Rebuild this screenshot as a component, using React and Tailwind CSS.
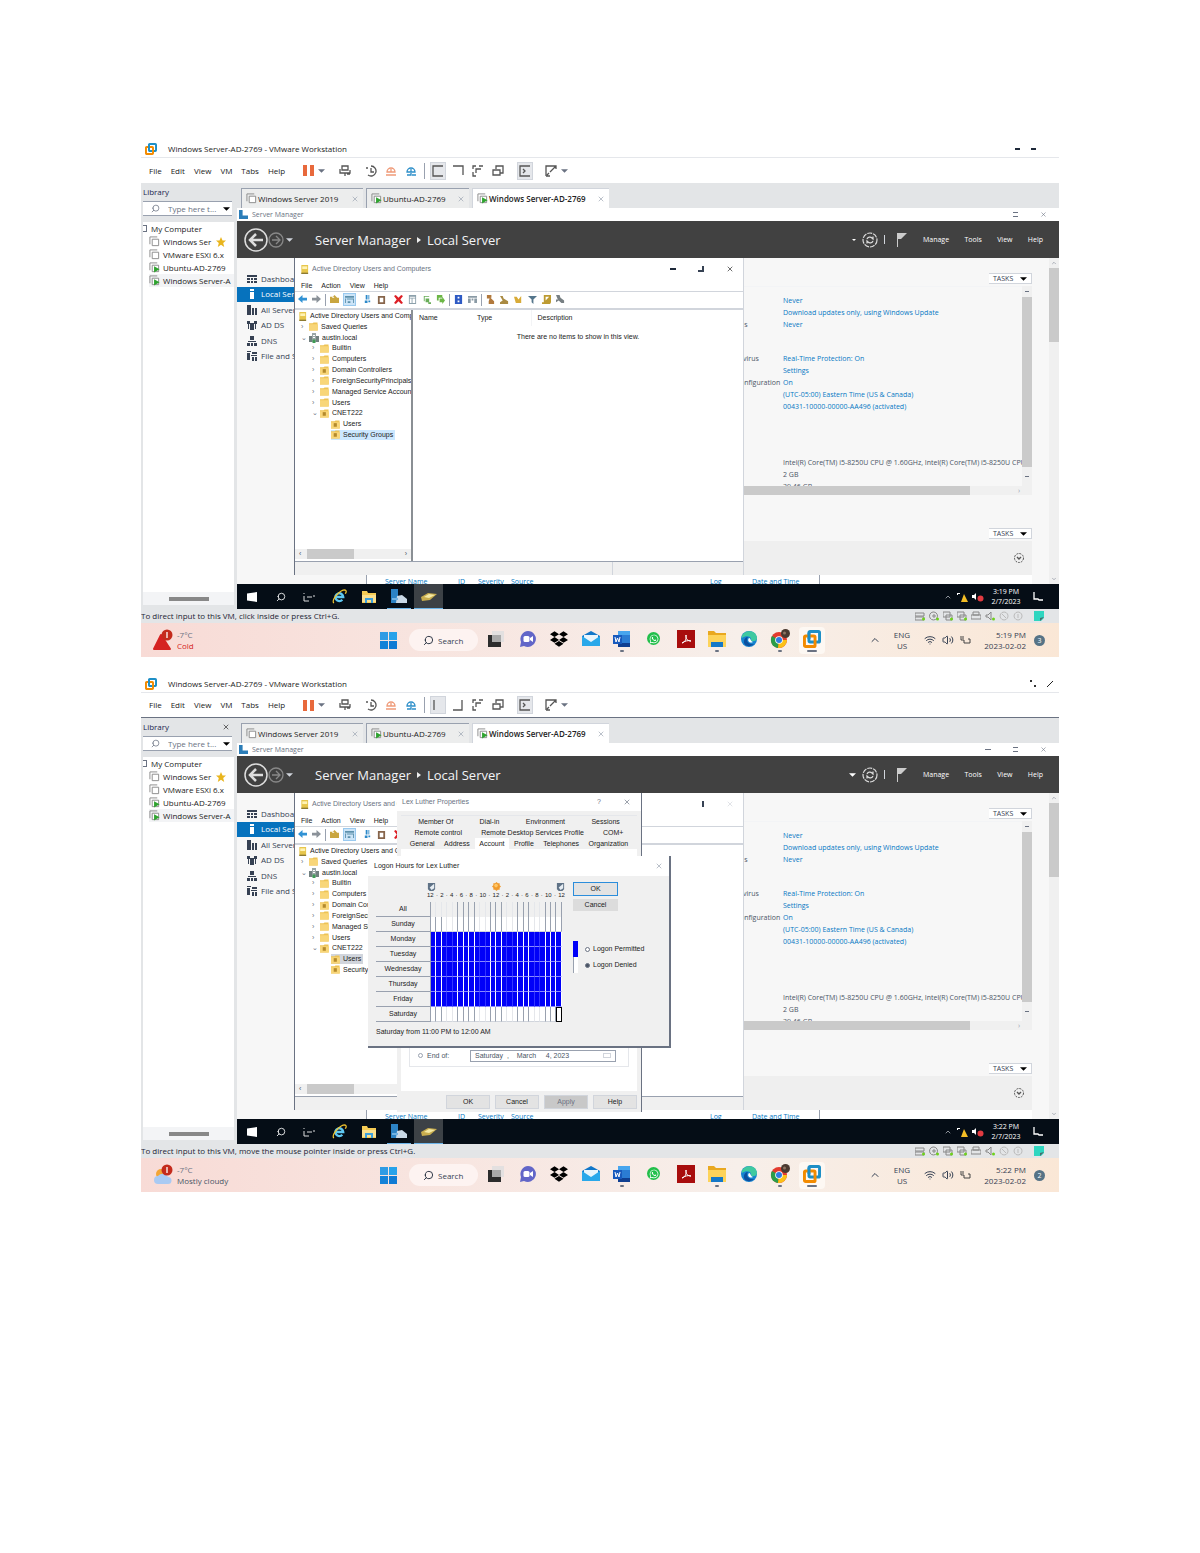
import clsx from 'clsx';
import { FaDropbox, FaWhatsapp } from 'react-icons/fa';
import { ChevronUp, Search, Volume2, Wifi, X } from 'lucide-react';

const sessions = [
  {
    id: 'a',
    hint: 'To direct input to this VM, click inside or press Ctrl+G.',
    serverTime: '3:19 PM',
    hostTime: '5:19 PM',
    weather: 'Cold',
    selected: 'Security Groups',
    badge: '3',
    dialogs: false,
  },
  {
    id: 'b',
    hint: 'To direct input to this VM, move the mouse pointer inside or press Ctrl+G.',
    serverTime: '3:22 PM',
    hostTime: '5:22 PM',
    weather: 'Mostly cloudy',
    selected: 'Users',
    badge: '2',
    dialogs: true,
  },
];

/* ---------- icons ---------- */

function VmwareLogo({ className }) {
  return (
    <svg viewBox="0 0 16 16" className={className} fill="none" strokeWidth="2.6">
      <rect x="5.3" y="1.3" width="9.4" height="9.4" rx="1" stroke="#1e8fc6" />
      <rect x="1.3" y="5.3" width="9.4" height="9.4" rx="1" stroke="#f38b00" />
      <path d="M5.3 8V2.5" stroke="#1e8fc6" />
    </svg>
  );
}

function VmIcon({ running }) {
  return (
    <svg viewBox="0 0 12 12" className="w-[11px] h-[11px] shrink-0" fill="none" stroke="#888">
      <path d="M1 9V1h8" />
      <path d="M3.5 3.5h7v7h-7z" fill="#fff" />
      {running && <path d="M5.5 4.5v7L11.5 8z" fill="#2fa32f" stroke="none" />}
    </svg>
  );
}

function Folder({ marked }) {
  return (
    <svg viewBox="0 0 10 10" className="w-[9px] h-[9px] shrink-0">
      <path d="M0 1.5h4l1-1h4.500v9H0z" fill="#edc355" />
      <path d="M0 2.500h10V9.500H0z" fill="#f8d679" />
      {marked && <path d="M3 3.500h3.500v4H3z" fill="#b48a2c" />}
    </svg>
  );
}

function Book() {
  return (
    <svg viewBox="0 0 10 10" className="w-[9px] h-[9px] shrink-0">
      <path d="M1.500 0H9v10H1.500z" fill="#e7c64c" />
      <path d="M2.500 1.500h5.500v3H2.500z" fill="#fff3b5" />
      <path d="M1.500 8.500H9V10H1.500z" fill="#8c7a33" />
    </svg>
  );
}

function Domain() {
  return (
    <svg viewBox="0 0 10 10" className="w-[10px] h-[10px] shrink-0">
      <path d="M3 0h4v9H3z" fill="#9aa6a6" />
      <path d="M0 3h3v6H0zM7 3h3v6H7z" fill="#728080" />
      <path d="M4 2h2v1H4zM4 4h2v1H4z" fill="#fff" />
      <path d="M3.500 6.500h3V10h-3z" fill="#3f9b55" />
    </svg>
  );
}

function Moon() {
  return (
    <svg viewBox="0 0 10 10" className="w-[9px] h-[9px]">
      <path d="M1 1h8v7l-2 2H3L1 8z" fill="#5f7286" />
      <path d="M3 6l5-4v5L5 9z" fill="#e6edf3" />
    </svg>
  );
}

function Sun() {
  return (
    <svg viewBox="0 0 10 10" className="w-[9px] h-[9px]">
      <path d="M5 0l1.500 1.500h2v2L10 5 8.500 6.500v2h-2L5 10 3.500 8.500h-2v-2L0 5l1.500-1.500v-2h2z" fill="#f09a2c" />
      <circle cx="4.500" cy="4" r="2" fill="#ffc765" />
    </svg>
  );
}

function Caret({ className, small }) {
  return (
    <svg viewBox="0 0 8 4" className={clsx('shrink-0', small ? 'w-[4px] h-[2px]' : 'w-[7px] h-[4px]', className)} fill="currentColor">
      <path d="M0 0h8L4 4z" />
    </svg>
  );
}

const navIcons = {
  Dashboard: 'M0 1h10v2H0zM0 4h3v2H0zM4 4h2v2H4zM7 4h3v2H7zM0 7h3v2H0zM4 7h2v2H4zM7 7h3v2H7z',
  'Local Server': 'M3 0h4v2H3zM3 3h4v7H3z',
  'All Servers': 'M0 0h4v10H0zM5 3h2v7H5zM8 3h2v7H8z',
  'AD DS': 'M0 1h3v3H0zM7 1h3v3H7zM1 4h1v5H1zM8 4h1v5H8zM3 3h4v7H3z',
  DNS: 'M3 0h4v4H3zM1 5h8v1H1zM0 7h3v3H0zM4 7h2v3H4zM7 7h3v3H7z',
  'File and Storage Services': 'M0 0h4v1H0zM0 2h3v7H0zM5 1h5v2H5zM4 4h6v1H4zM5 6h2v4H5zM8 6h2v4H8z',
};

/* ---------- VMware frame ---------- */

function TitleBar({ second }) {
  return (
    <header className="flex items-center h-[18px] pl-1 bg-white border-b border-gray-200">
      <VmwareLogo className="w-3 h-3" />
      <h1 className="ml-[11px] flex-1 text-[8px]">Windows Server-AD-2769 - VMware Workstation</h1>
      {second ? (
        <div className="flex items-center gap-[9px] mr-[5px]">
          <svg viewBox="0 0 8 8" className="w-2 h-2" fill="#333"><path d="M1 0h2v2H1zM5 5h2v2H5z" /></svg>
          <svg viewBox="0 0 8 8" className="w-2 h-2" stroke="#222"><path d="M1 7l6-6" /></svg>
        </div>
      ) : (
        <div className="flex items-center gap-[11px] mr-[23px]">
          <span className="w-[5px] h-[2px] bg-gray-800" />
          <span className="w-[5px] h-[2px] bg-gray-800" />
        </div>
      )}
    </header>
  );
}

function Tool({ d, color = '#555', active, label }) {
  return (
    <button
      aria-label={label}
      className={clsx('flex items-center justify-center w-4 h-[18px] shrink-0', active && 'bg-gray-200 border border-gray-300')}
    >
      <svg viewBox="0 0 12 12" className="w-3 h-3 shrink-0" fill="none" stroke={color} strokeWidth="1.300">
        <path d={d} />
      </svg>
    </button>
  );
}

function MenuBar({ second }) {
  return (
    <div className={clsx('flex items-center pl-2 bg-white text-[8px]', second ? 'h-6' : 'h-[25px]')}>
      <div className="flex w-[154px]">
        {['File', 'Edit', 'View', 'VM', 'Tabs', 'Help'].map((m) => (
          <button key={m} className="pr-[9px] last:pr-0">{m}</button>
        ))}
      </div>
      <button aria-label="Suspend" className="flex gap-[3px]">
        <span className="w-[4px] h-[11px] bg-[#e8693c]" />
        <span className="w-[4px] h-[11px] bg-[#e8693c]" />
      </button>
      <Caret className="ml-1 text-gray-500" />
      <div className="flex ml-3">
        <Tool label="Send Ctrl+Alt+Del" d="M3 1h6v4H3zM1 4v4h10V5M6 8v3M8 9h3" />
      </div>
      <div className="flex gap-[4px] ml-[10px]">
        <Tool label="Take snapshot" d="M1 3h2M6 1a5 5 0 1 1-3 9M6 3v4h3" />
        <Tool label="Revert snapshot" color="#ef9a78" d="M2 7a4 4 0 0 1 8 0zM6 4v3M1 10h10" />
        <Tool label="Manage snapshots" color="#2d8fc9" d="M2 7a4 4 0 0 1 8 0zM6 4v3M2 10h4v-2M7 10h4" />
      </div>
      <span className="mx-[5px] w-px h-4 bg-gray-400" />
      <div className="flex gap-1">
        <Tool label="Show library" active d={second ? 'M2 1v10' : 'M11 1H1v10h10'} />
        <Tool label="Show thumbnail bar" d={second ? 'M10 1v10H1' : 'M1 1h10v9'} />
        <Tool label="Full screen" d="M1 4V1h3M7 1h4M1 7v4h3M4 8V4h5" />
        <Tool label="Unity" d="M4 4V1h7v7H8M1 5h7v5H1z" />
      </div>
      <div className="flex gap-[10px] ml-[11px]">
        <Tool label="Console" active d="M11 1H1v10h10M4 4l2 2-2 2" />
        <Tool label="Stretch guest" d="M8 1H1v10M1 11h4M5 7l6-6M8 1h3v3M4 8l-2 2" />
      </div>
      <Caret className="ml-[2px] text-gray-500" />
    </div>
  );
}

function Library({ second }) {
  const vms = [
    { name: 'Windows Ser', star: true },
    { name: 'VMware ESXi 6.x' },
    { name: 'Ubuntu-AD-2769', running: true },
    { name: 'Windows Server-A', running: true, active: true },
  ];
  return (
    <aside className="flex flex-col w-24 shrink-0 pl-[2px] pr-[3px] text-[8px] overflow-hidden">
      <div className="flex items-center h-[18px] pr-1">
        <span className="flex-1 text-[#1b2550]">Library</span>
        {second && <X className="w-2 h-2" />}
      </div>
      <label className="flex items-center h-[15px] mr-[2px] bg-white border-y border-gray-400 text-gray-500">
        <Search className="ml-2 w-[9px] h-[9px] -scale-x-100" />
        <input aria-label="Search library" placeholder="Type here t..." className="flex-1 min-w-0 ml-2 outline-none placeholder:text-gray-500" />
        <Caret className="mr-[2px] text-black" />
      </label>
      <ul className="flex-1 mt-[6px] bg-white whitespace-nowrap">
        <li className="flex items-center h-[13px] gap-1">
          <span className="w-1 h-[7px] border border-l-0 border-gray-500" />
          My Computer
        </li>
        {vms.map((vm) => (
          <li key={vm.name} className={clsx('flex items-center h-[13px] ml-[6px] gap-[3px] overflow-hidden', vm.active && 'bg-gray-100')}>
            <VmIcon running={vm.running} />
            {vm.name}
            {vm.star && (
              <svg viewBox="0 0 10 10" className="ml-[2px] w-[10px] h-[10px] shrink-0"><path d="M5 0l1.500 3.500H10L7.200 6l1 4L5 7.700 1.800 10l1-4L0 3.500h3.500z" fill="#e9b51d" /></svg>
            )}
          </li>
        ))}
      </ul>
      <div className="flex justify-center items-center h-[13px] mb-1 bg-gray-100">
        <span className="w-10 h-[4px] bg-[#888]" />
      </div>
    </aside>
  );
}

function VmTabs() {
  const tabs = [
    { name: 'Windows Server 2019', width: 'w-[122px]' },
    { name: 'Ubuntu-AD-2769', width: 'w-[103px]', running: true },
    { name: 'Windows Server-AD-2769', width: 'w-[137px]', running: true, active: true },
  ];
  return (
    <div className="flex items-end h-[25px] pl-1 gap-[3px] text-[8px]">
      {tabs.map((tab) => (
        <div
          key={tab.name}
          className={clsx('flex items-center h-5 px-1 border-t border-l whitespace-nowrap', tab.width, tab.active ? 'bg-white border-gray-300 font-semibold' : 'bg-[#eceded] border-gray-400')}
        >
          <VmIcon running={tab.running} />
          <button className="flex-1 ml-px text-left">{tab.name}</button>
          <X className="w-2 h-2 text-gray-400" />
        </div>
      ))}
    </div>
  );
}

/* ---------- Server Manager ---------- */

function ServerManagerHeader({ second }) {
  return (
    <>
      <div className="flex items-center h-[13px] pl-[2px] pr-3 bg-white text-[7px] text-gray-500">
        <svg viewBox="0 0 10 10" className="w-[9px] h-[9px]"><path d="M0 0h4v6h6v4H0z" fill="#2b7db8" /></svg>
        <span className="ml-1 flex-1">Server Manager</span>
        <span className={clsx('w-[6px] h-px bg-gray-500 mr-[22px]', !second && 'hidden')} />
        <span className="w-[5px] h-[5px] border-y border-gray-500 mr-[22px]" />
        <X className="w-[7px] h-[7px]" />
      </div>
      <div className="flex items-center h-[37px] pl-[7px] pr-4 bg-[#414141] text-white">
        <svg viewBox="0 0 24 24" className="w-6 h-6" fill="none" stroke="#ddd" strokeWidth="2">
          <circle cx="12" cy="12" r="11" strokeWidth="1.500" />
          <path d="M19 12H6M12 6l-6 6 6 6" strokeWidth="2.500" />
        </svg>
        <svg viewBox="0 0 16 16" className="w-4 h-4" fill="none" stroke="#888" strokeWidth="1.300">
          <circle cx="8" cy="8" r="7" />
          <path d="M4 8h8M8 4l4 4-4 4" />
        </svg>
        <Caret className="ml-[2px] text-gray-300" />
        <h2 className="flex items-center ml-[22px] flex-1 text-[13px] leading-4 text-gray-100 whitespace-nowrap">
          Server Manager
          <svg viewBox="0 0 4 6" className="mx-[6px] w-[4px] h-[6px]" fill="#eee"><path d="M0 0l4 3-4 3z" /></svg>
          Local Server
        </h2>
        <Caret small={!second} />
        <svg viewBox="0 0 16 16" className="ml-[6px] w-4 h-4" fill="none" stroke="#ddd" strokeWidth="1.200">
          <circle cx="8" cy="8" r="7" strokeDasharray="5 1" />
          <path d="M5 7a3 3 0 0 1 5-1l1 1V4.500M11 9a3 3 0 0 1-5 1L5 9v2.500" />
        </svg>
        <span className="ml-[6px] w-px h-[9px] bg-gray-300" />
        <svg viewBox="0 0 10 14" className="ml-3 w-[10px] h-[14px]"><path d="M0 0h10L4 6H1v8H0z" fill="#ccc" /></svg>
        <div className="flex justify-between w-[120px] ml-4 text-[7px]">
          {['Manage', 'Tools', 'View', 'Help'].map((m) => <button key={m}>{m}</button>)}
        </div>
      </div>
    </>
  );
}

function SideNav() {
  return (
    <nav className="w-[57px] shrink-0 pt-[13px] bg-[#f7f7f7] text-[8px] overflow-hidden">
      <div className="flex flex-col justify-between h-[93px]">
        {Object.entries(navIcons).map(([name, d]) => (
          <a
            key={name}
            href="#"
            className={clsx('flex items-center h-[15px] pl-[10px] gap-1 whitespace-nowrap', name === 'Local Server' ? 'bg-[#0672bd] text-white' : 'text-gray-700')}
          >
            <svg viewBox="0 0 10 10" className="w-[10px] h-[10px] shrink-0" fill="currentColor"><path d={d} /></svg>
            {name}
          </a>
        ))}
      </div>
    </nav>
  );
}

const properties = [
  [
    ['Last installed updates', 'Never'],
    ['Windows Update', 'Download updates only, using Windows Update'],
    ['Last checked for updates', 'Never'],
  ],
  [
    ['Windows Defender Antivirus', 'Real-Time Protection: On'],
    ['Feedback & Diagnostics', 'Settings'],
    ['IE Enhanced Security Configuration', 'On'],
    ['Time zone', '(UTC-05:00) Eastern Time (US & Canada)'],
    ['Product ID', '00431-10000-00000-AA496 (activated)'],
  ],
];

function TasksButton() {
  return (
    <button className="flex items-center justify-between w-[43px] h-[11px] px-1 bg-white border-y border-r border-gray-300 text-[7px] text-gray-700">
      TASKS
      <Caret className="text-black" />
    </button>
  );
}

function Properties() {
  return (
    <section className="flex flex-col flex-1 min-w-0 bg-[#f7f7f7] pr-[17px] text-[7px]">
      <div className="flex justify-end pt-[15px] pb-[2px]">
        <TasksButton />
      </div>
      <div className="flex h-[200px]">
        <div className="flex-1 min-w-0 pl-[372px] pt-[8px] border-t border-gray-100 overflow-hidden whitespace-nowrap">
          {properties.map((group, i) => (
            <dl key={i} className="mb-[22px]">
              {group.map(([label, value]) => (
                <div key={label} className="flex h-3 items-center">
                  <dt className="w-[117px] shrink-0 text-gray-600">{label}</dt>
                  <dd><a href="#" className="text-[#0678c4]">{value}</a></dd>
                </div>
              ))}
            </dl>
          ))}
          <div className="mt-[44px] pl-[117px] text-gray-600 leading-3">
            <p>Intel(R) Core(TM) i5-8250U CPU @ 1.60GHz, Intel(R) Core(TM) i5-8250U CPU @ 1.60GHz</p>
            <p>2 GB</p>
            <p>39.46 GB</p>
          </div>
        </div>
        <div className="flex flex-col w-[10px] bg-[#f0f0f0]">
          <span className="flex justify-center items-center h-[11px]"><span className="w-[4px] h-px bg-gray-500" /></span>
          <span className="h-[170px] bg-[#cacaca]" />
          <span className="flex justify-center items-center flex-1"><span className="w-[4px] h-px bg-gray-500" /></span>
        </div>
      </div>
      <div className="flex items-center h-[9px] bg-[#f0f0f0] text-gray-400">
        <span className="w-[676px] h-full bg-[#cacaca]" />
        <span className="flex-1 text-right pr-3">›</span>
      </div>
      <div className="flex justify-end pt-[33px] pb-[2px]">
        <TasksButton />
      </div>
      <div className="flex justify-end items-center h-[34px] pr-2 bg-[#efefef]">
        <svg viewBox="0 0 10 10" className="w-[10px] h-[10px]" fill="none" stroke="#555"><circle cx="5" cy="5" r="4.500" strokeDasharray="2 1" /><path d="M3 4l2 2 2-2" strokeWidth="1.400" /></svg>
      </div>
      <div className="flex flex-1 ml-[72px] pl-[18px] border-l border-gray-400 bg-white text-[#0678c4] leading-[14px] h-2 overflow-hidden whitespace-nowrap">
        <span className="w-[73px]">Server Name</span>
        <span className="w-[20px]">ID</span>
        <span className="w-[33px]">Severity</span>
        <span className="w-[199px]">Source</span>
        <span className="w-[42px]">Log</span>
        <span className="w-[68px] border-r border-gray-400">Date and Time</span>
      </div>
    </section>
  );
}

/* ---------- Active Directory Users and Computers ---------- */

const tree = [
  { name: 'Active Directory Users and Computers', pad: 'pl-[3px]', icon: 'book' },
  { name: 'Saved Queries', pad: 'pl-[6px]', mark: '›' },
  { name: 'austin.local', pad: 'pl-[6px]', mark: '⌄', icon: 'domain' },
  { name: 'Builtin', pad: 'pl-[17px]', mark: '›' },
  { name: 'Computers', pad: 'pl-[17px]', mark: '›' },
  { name: 'Domain Controllers', pad: 'pl-[17px]', mark: '›', marked: true },
  { name: 'ForeignSecurityPrincipals', pad: 'pl-[17px]', mark: '›' },
  { name: 'Managed Service Accounts', pad: 'pl-[17px]', mark: '›' },
  { name: 'Users', pad: 'pl-[17px]', mark: '›' },
  { name: 'CNET222', pad: 'pl-[17px]', mark: '⌄', marked: true },
  { name: 'Users', pad: 'pl-[36px]', marked: true, leaf: true },
  { name: 'Security Groups', pad: 'pl-[36px]', marked: true, leaf: true },
];

function DirectoryTree({ selected, second }) {
  return (
    <div className="flex flex-col w-[118px] shrink-0 bg-white border-r-2 border-[#8a8f94]">
      <ul className="flex flex-col justify-between h-[130px] pt-px overflow-hidden whitespace-nowrap">
        {tree.map((node, i) => (
          <li key={i} className={clsx('flex items-center h-[10px]', node.pad)}>
            {node.mark && <span className="w-2 shrink-0 text-gray-500">{node.mark}</span>}
            <span className={clsx('flex items-center gap-[3px] pr-[2px]', node.leaf && node.name === selected && (second ? 'bg-gray-300' : 'bg-[#cce8ff]'))}>
              {node.icon === 'book' && <Book />}
              {node.icon === 'domain' && <Domain />}
              {!node.icon && <Folder marked={node.marked} />}
              {node.name}
            </span>
          </li>
        ))}
      </ul>
      <div className="flex items-center mt-auto mb-[2px] h-[10px] px-1 bg-[#f0f0f0] text-gray-600">
        <span className="w-2">‹</span>
        <span className="w-[47px] h-full bg-[#cacaca]" />
        <span className="ml-auto">›</span>
      </div>
    </div>
  );
}

function AducToolbar() {
  const icons = [
    ['#3192d4', 'M5 0v3h5v3H5v3L0 4.500z'],
    ['#8b9299', 'M5 0v3H0v3h5v3l5-4.500z'],
    'line',
    ['#c9a640', 'M0 2h4l1 1h5v6H0zM5 0l3 3H2z'],
    ['#5d91ad', 'M0 1h10v2H0zM0 4h1v5H0zM2 4h8v1H2zM9 5h1v4H9zM3 7h3v2H3z', true],
    'space',
    ['#2c89c9', 'M3 0h2v5H3zM6 0h1v5H6zM2 6h3v3H2zM6 6h2v2H6z'],
    ['#87654b', 'M1 1h8v9H1zM3 3v5h4V3z'],
    'space',
    ['#dd1f26', 'M0 1l2-1 3 3 3-3 2 1-3 4 3 4-2 1-3-3-3 3-2-1 3-4z'],
    ['#8ca0ab', 'M1 0h8v10H1zM2 2v1h6V2zM2 4v5h2V4zM5 4v5h3V4z'],
    ['#68ad58', 'M2 1h6v1H3v5H2zM4 4h4v4H4zM7 8h3v2H7z'],
    ['#6bb645', 'M1 0h6v3H3v3H1zM4 4h3V2l3 4-3 4V8H4z'],
    'line',
    ['#2e5ac4', 'M1 0h8v10H1zM4 2v2h2V2zM4 6v2h2V6z'],
    ['#8a9aa5', 'M0 1h10v2H0zM0 4h3v5H0zM4 4h2v2H4zM7 4h3v5H7z'],
    'line',
    ['#b1793d', 'M1 0h5v3H5l4 4v3H3V7l1-3H1z'],
    ['#a98a42', 'M0 1h3l1 3 5 3v3H0V8l3-2z'],
    ['#d8ab38', 'M0 2h3l2 3 3-4v8H2z'],
    ['#54758b', 'M0 1h10L6 5v5L4 8V5z'],
    ['#bd9b32', 'M2 0h8v8l-1 2H0V8h2zM4 2v4l4-4z'],
    ['#777f83', 'M0 0h4l1 3 4 3v3H6L3 6 0 8V5h2z'],
  ];
  return (
    <div className="flex items-center h-[15px] pl-[2px] gap-[3px]">
      {icons.map((icon, i) =>
        Array.isArray(icon) ? (
          <button key={i} aria-label={`Tool ${i + 1}`} className={clsx('flex items-center justify-center h-[13px]', icon[2] ? 'w-[13px] bg-[#cce4f7] border border-[#99c9ef]' : 'w-[11px]')}>
            <svg viewBox="0 0 10 10" className="w-[9px] h-[9px]" fill={icon[0]} fillRule="evenodd"><path d={icon[1]} /></svg>
          </button>
        ) : (
          <span key={i} className={clsx('h-3', icon === 'line' && 'w-px bg-gray-400')} />
        ),
      )}
    </div>
  );
}

function AducWindow({ selected, second }) {
  return (
    <div className="absolute left-[57px] top-0 flex flex-col w-[450px] h-[317px] bg-white border-l border-r border-l-gray-500 border-r-gray-300 font-['Liberation_Sans',sans-serif] text-[7px]">
      <div className="flex items-center h-[22px] pl-[5px] pr-[9px]">
        <Book />
        <span className="ml-[3px] flex-1 text-gray-500">Active Directory Users and Computers</span>
        <span className={clsx('w-[6px] h-[2px] mr-[22px] bg-gray-800', second && 'invisible')} />
        <span className={clsx('w-[6px] h-[6px] mr-[22px] border-r-2 border-gray-700', !second && 'border-b-2')} />
        <X className={clsx('w-2 h-2', second && 'text-gray-300')} />
      </div>
      <div className="flex items-center h-[11px] pl-[6px] gap-[9px]">
        {['File', 'Action', 'View', 'Help'].map((m) => <button key={m}>{m}</button>)}
      </div>
      <div className="h-[19px] border-t border-gray-300 border-b-2 border-b-gray-300">
        <AducToolbar />
      </div>
      <div className="flex flex-1 min-h-0 border-b border-gray-400">
        <DirectoryTree selected={selected} second={second} />
        <div className="flex-1">
          {!second && (
            <table className="w-full text-left">
              <thead>
                <tr className="h-4">
                  <th className="w-[58px] pl-[6px] font-normal">Name</th>
                  <th className="w-[60px] pl-[6px] font-normal border-r border-gray-100">Type</th>
                  <th className="pl-[6px] font-normal">Description</th>
                </tr>
              </thead>
              <tbody>
                <tr><td colSpan={3} className="pt-[6px] text-center">There are no items to show in this view.</td></tr>
              </tbody>
            </table>
          )}
        </div>
      </div>
      <div className="h-[13px] bg-[#f0f0f0]">
        <div className="w-[318px] h-full border-r border-gray-300" />
      </div>
    </div>
  );
}

/* ---------- User properties and logon hours ---------- */

function PropertiesDialog() {
  const rows = [
    ['Member Of', 'Dial-in', 'Environment', 'Sessions'],
    ['Remote control', 'Remote Desktop Services Profile', 'COM+'],
    ['General', 'Address', 'Account', 'Profile', 'Telephones', 'Organization'],
  ];
  return (
    <div className="absolute left-40 top-0 flex flex-col w-[245px] h-[319px] px-1 bg-[#f0f0f0] border-r border-gray-500 font-['Liberation_Sans',sans-serif] text-[7px]">
      <div className="flex items-center h-[18px] -mx-1 pl-[5px] pr-[10px] bg-white text-gray-500">
        <span className="flex-1">Lex Luther Properties</span>
        <span className="mr-[22px]">?</span>
        <X className="w-2 h-2" />
      </div>
      <div className="mt-1 border-t border-gray-200">
        {rows.map((row, i) => (
          <div key={i} className="flex justify-between h-[11px] px-1">
            {row.map((t) => (
              <button key={t} className={clsx('flex-auto', t === 'Account' && 'bg-white')}>{t}</button>
            ))}
          </div>
        ))}
      </div>
      <div className="flex flex-col flex-1 justify-end bg-white px-2 pb-[24px]">
        <div className="flex items-center h-[22px] pl-2 pr-3 border-x border-b border-gray-200 text-gray-600">
          <label className="flex items-center w-[52px] gap-1">
            <input type="radio" name="expires" className="appearance-none w-[5px] h-[5px] rounded-full border border-gray-400" />
            End of:
          </label>
          <div className="flex items-center flex-1 h-3 px-1 border border-gray-400">
            <input aria-label="Expiry date" defaultValue="Saturday  ,    March     4, 2023" className="flex-1 min-w-0 outline-none" />
            <span className="w-2 h-[5px] border border-gray-300" />
          </div>
        </div>
      </div>
      <div className="flex justify-end gap-[5px] h-[21px] pt-1">
        {['OK', 'Cancel', 'Apply', 'Help'].map((b) => (
          <button key={b} disabled={b === 'Apply'} className="w-11 h-[14px] border border-gray-300 bg-[#e3e3e3] disabled:bg-[#c8c8c8] disabled:text-gray-500">{b}</button>
        ))}
      </div>
    </div>
  );
}

const days = ['All', 'Sunday', 'Monday', 'Tuesday', 'Wednesday', 'Thursday', 'Friday', 'Saturday'];
const hourMarks = ['12', '2', '4', '6', '8', '10', '12', '2', '4', '6', '8', '10', '12'];
const hours = Array.from({ length: 24 }, (_, i) => i + 1);
const faint = [3, 4, 9, 10, 14, 15, 19, 20];

function hourCell(day, hour) {
  if (day > 1 && day < 7) {
    return clsx('bg-[#0000f8] border-b border-b-[#8888ff] border-r', faint.includes(hour) ? 'border-r-[#3535ff]' : 'border-r-white');
  }
  if (day === 7 && hour === 24) return 'bg-white border border-black';
  if (day === 0) return clsx('border-r', faint.includes(hour) || hour < 5 ? 'border-gray-200' : 'border-gray-400');
  return clsx('bg-white border-r border-b border-b-gray-300', faint.includes(hour) ? 'border-r-gray-200' : 'border-r-gray-400');
}

function LogonHoursDialog() {
  return (
    <div className="absolute left-[131px] top-[63px] w-[303px] h-[192px] bg-[#f0f0f0] border-r-2 border-b-2 border-gray-500 font-['Liberation_Sans',sans-serif] text-[7px]">
      <div className="flex items-center h-5 pl-[6px] pr-[6px] bg-white">
        <span className="flex-1">Logon Hours for Lex Luther</span>
        <X className="w-2 h-2 text-gray-400" />
      </div>
      <div className="flex pl-2 pt-[6px]">
        <div className="w-[189px] shrink-0">
          <div className="flex justify-between pl-[51px]"><Moon /><Sun /><Moon /></div>
          <div className="flex justify-between pl-[51px] text-[6px] leading-2">
            {hourMarks.map((h, i) => (
              <span key={i} className="contents">
                {i > 0 && <span>·</span>}
                <span>{h}</span>
              </span>
            ))}
          </div>
          <table className="table-fixed border-separate border-spacing-0 w-[186px] mt-[3px]">
            <tbody>
              {days.map((day, d) => (
                <tr key={day}>
                  <th className="w-[55px] h-[15px] p-0 font-normal">
                    <button className="block w-full h-[15px] border-b border-r border-gray-400">{day}</button>
                  </th>
                  {hours.map((h) => <td key={h} className={clsx('p-0', hourCell(d, h))} />)}
                </tr>
              ))}
            </tbody>
          </table>
        </div>
        <div className="ml-2 flex flex-col">
          <button className="w-[45px] h-[14px] border border-[#2b8ddb] bg-[#e3e3e3]">OK</button>
          <button className="w-[45px] h-[12px] mt-[3px] bg-[#dcdcdc]">Cancel</button>
          <div className="mt-[30px] flex flex-col whitespace-nowrap">
            <label className="flex items-center h-4 gap-[3px]">
              <span className="w-[5px] h-4 mr-1 bg-[#0000f8]" />
              <input type="radio" name="logon" className="appearance-none w-[5px] h-[5px] rounded-full border border-gray-500 bg-white" />
              Logon Permitted
            </label>
            <label className="flex items-center h-4 gap-[3px]">
              <span className="w-[5px] h-4 mr-1 bg-white border-l border-gray-400" />
              <input type="radio" name="logon" defaultChecked className="appearance-none w-[5px] h-[5px] rounded-full border border-gray-500 checked:bg-gray-600" />
              Logon Denied
            </label>
          </div>
        </div>
      </div>
      <p className="pl-2 mt-[5px]">Saturday from 11:00 PM to 12:00 AM</p>
    </div>
  );
}

/* ---------- task bars ---------- */

function ServerTaskbar({ time }) {
  return (
    <div className="flex items-center h-[25px] bg-[#050d16] text-white text-[7px]">
      <button aria-label="Start" className="w-[29px] flex justify-center">
        <svg viewBox="0 0 10 10" className="w-[10px] h-[10px]"><path d="M0 1.500L10 0v10L0 8.500z" fill="#fff" /></svg>
      </button>
      <button aria-label="Search" className="w-[29px] flex justify-center"><Search className="w-[10px] h-[10px] -scale-x-100" /></button>
      <button aria-label="Task view" className="w-[28px] flex justify-center">
        <svg viewBox="0 0 12 10" className="w-3 h-[10px]" fill="none" stroke="#ddd"><path d="M1 1v1M1 4v5h5M4 5h5M10 4h2" /></svg>
      </button>
      <button aria-label="Internet Explorer" className="w-8 flex justify-center">
        <svg viewBox="0 0 16 16" className="w-[15px] h-[15px]" fill="none">
          <path d="M4 8.500h8a4.200 4.200 0 1 0-1 3" stroke="#5fc8f2" strokeWidth="2.500" />
          <path d="M2 15C-1 12 8 1 14 1c2 1 1 3 0 4" stroke="#f4c52e" strokeWidth="1.300" />
        </svg>
      </button>
      <button aria-label="File Explorer" className="w-7 flex justify-center">
        <svg viewBox="0 0 14 12" className="w-[14px] h-3"><path d="M0 0h5l1 2h8v10H0z" fill="#f5cb55" /><path d="M0 4h14v7H0z" fill="#fbe08f" /><path d="M3 7h8v5H9V9H5v3H3z" fill="#3ea0dc" /></svg>
      </button>
      <button aria-label="Server Manager" className="w-[31px] h-full flex items-center justify-center">
        <span className="flex items-center justify-center w-6 h-full border-b border-[#6db5ea]">
          <svg viewBox="0 0 16 14" className="w-4 h-[14px]"><path d="M0 0h7v14H0z" fill="#2c82c4" /><path d="M6 7l5-1 5 4v4H5z" fill="#c9d8e6" /><path d="M1 9h6v2H1z" fill="#71b2e2" /></svg>
        </span>
      </button>
      <button aria-label="Active Directory" className="w-[29px] h-full flex items-center justify-center bg-[#3c4146] border-b border-[#6db5ea]">
        <svg viewBox="0 0 16 9" className="w-4 h-[9px]"><path d="M0 5l7-4 9 1-7 6-8 1z" fill="#c8ad4e" /><path d="M3 5l5-3 6 1-6 3z" fill="#f4e9a5" /></svg>
      </button>
      <div className="flex items-center gap-1 ml-auto mr-4">
        <ChevronUp className="w-2 h-2 text-gray-300" />
        <svg viewBox="0 0 12 10" className="w-3 h-[10px]"><path d="M1 1h3v1H2v1H1z" fill="#fff" /><path d="M8 2l4 8H5z" fill="#f4bd25" /></svg>
        <svg viewBox="0 0 12 10" className="w-3 h-[10px]"><path d="M0 3h2l2-2v7L2 6H0z" fill="#fff" /><circle cx="8.500" cy="6.500" r="3" fill="#e23b41" /></svg>
        <div className="w-9 text-center">{time}<br />2/7/2023</div>
        <svg viewBox="0 0 10 10" className="ml-[5px] w-[10px] h-[10px]" fill="none" stroke="#fff" strokeWidth="1.300"><path d="M1 0v7h4l1 1h4" /></svg>
      </div>
    </div>
  );
}

function StatusBar({ hint }) {
  const devices = ['M0 2h9v3H0zM0 6h9v3H0z', 'M4 1a4 4 0 1 0 1 0zM4 4h2v2H4z', 'M0 1h7v5H0zM3 4h6v5H3z', 'M0 1h7v5H0zM3 4h6v5H3z', 'M2 1h6v3H2zM0 4h10v4H0z', 'M1 4h2l3-3v8L3 6H1z', 'M5 1a4 4 0 1 0 .1 0zM3 3l4 4', 'M5 1a4 4 0 1 0 .1 0zM5 3v4'];
  return (
    <div className="flex items-center h-[14px] pr-[15px] bg-[#e3e5e7] text-[8px] text-[#1d2433]">
      <span className="flex-1">{hint}</span>
      <div className="flex gap-1">
        {devices.map((d, i) => (
          <svg key={i} viewBox="0 0 10 10" className="w-[10px] h-[10px]" fill="none" stroke={i > 5 ? '#bbb' : '#888'}>
            <path d={d} />
            {i !== 4 && i < 6 && <circle cx="8.500" cy="8" r="1.500" fill="#6ed11c" stroke="none" />}
          </svg>
        ))}
      </div>
      <svg viewBox="0 0 10 10" className="ml-[11px] w-[10px] h-[10px]"><path d="M0 0h10v7l-3 3H0z" fill="#2fd6c0" /><path d="M10 6l-4 4V7z" fill="#4b6b6c" /></svg>
    </div>
  );
}

const apps = [
  { name: 'Task view', icon: <svg viewBox="0 0 18 18" className="w-[18px] h-[18px]"><path d="M1 5h13v12H1z" fill="#2c2c2c" /><path d="M5 1h12v11H5z" fill="#e3e0e0" /><path d="M5 5h9v7H5z" fill="#aaa" /></svg> },
  { name: 'Chat', icon: <svg viewBox="0 0 18 18" className="w-[18px] h-[18px]"><path d="M9 1a8 8 0 1 1-4 15l-4 1 1-5A8 8 0 0 1 9 1z" fill="#6266c8" /><rect x="4.500" y="6" width="6" height="6" rx="1.500" fill="#fff" /><path d="M11 8l3-2v6l-3-2z" fill="#fff" /></svg> },
  { name: 'Dropbox', icon: <FaDropbox className="w-[18px] h-[18px] text-black" /> },
  { name: 'Mail', icon: <svg viewBox="0 0 18 18" className="w-[18px] h-[18px]"><path d="M0 6l9-5 9 5v10H0z" fill="#1277c9" /><path d="M2 5h14v7H2z" fill="#e9f5fc" /><path d="M0 6l9 6 9-6v10H0z" fill="#29a8ea" /></svg> },
  { name: 'Word', open: true, icon: <svg viewBox="0 0 18 18" className="w-[18px] h-[18px]"><path d="M5 1h12v16H5z" fill="#2b7cd3" /><path d="M5 1h12v4H5z" fill="#47a5ee" /><path d="M5 13h12v4H5z" fill="#103f91" /><path d="M0 5h9v9H0z" fill="#185abd" /><path d="M2 7l1 5 1.500-4L6 12l1-5" fill="none" stroke="#fff" /></svg> },
  { name: 'WhatsApp', icon: <span className="flex items-center justify-center w-[13px] h-[13px] rounded-full bg-[#22bf4b]"><FaWhatsapp className="w-[10px] h-[10px] text-white" /></span> },
  { name: 'Acrobat', icon: <svg viewBox="0 0 18 18" className="w-[18px] h-[18px]"><path d="M0 0h18v18H0z" fill="#a80d0d" /><path d="M5 13c3-1 5-4 4-8-1 4 2 6 5 6-3-1-6 0-9 2z" fill="none" stroke="#fff" /></svg> },
  { name: 'File Explorer', open: true, icon: <svg viewBox="0 0 18 18" className="w-[18px] h-[18px]"><path d="M0 1h6l2 2h10v13H0z" fill="#e9a820" /><path d="M0 5h18v12H0z" fill="#fdd35a" /><path d="M3 12h12v5H3z" fill="#1478c8" /></svg> },
  { name: 'Edge', icon: <svg viewBox="0 0 18 18" className="w-[18px] h-[18px]"><circle cx="9" cy="9" r="8" fill="#1683d0" /><path d="M2 6C4 0 16-1 17 8c0 4-6 4-6 2 1-4-5-5-9-2z" fill="#3fc9a0" /><path d="M8 7c-3 4 1 8 6 7-4 4-11 2-10-3 0-2 2-4 4-4z" fill="#0c4f9e" /><path d="M9 8c2 0 1 3 4 4-4 2-6-2-4-4z" fill="#fff" /></svg> },
  { name: 'Chrome', open: true, icon: <svg viewBox="0 0 20 20" className="w-5 h-5"><circle cx="9" cy="11" r="8" fill="#e33b2e" /><path d="M9 11L2 7a8 8 0 0 0 6 12z" fill="#2a9d4a" /><path d="M9 11h8a8 8 0 0 1-9 8z" fill="#fbc116" /><circle cx="9" cy="11" r="3.800" fill="#fff" /><circle cx="9" cy="11" r="3" fill="#2f7de1" /><circle cx="15.500" cy="4.500" r="4.500" fill="#4b3a31" /><circle cx="14.500" cy="4" r="1.500" fill="#8e7563" /></svg> },
  { name: 'VMware', open: true, active: true, icon: <VmwareLogo className="w-[18px] h-[18px]" /> },
];

function HostTaskbar({ session }) {
  const cold = session.weather === 'Cold';
  return (
    <footer className="flex items-center h-[34px] pl-3 pr-[14px] bg-linear-to-r from-[#f8dbd6] via-[#f7efea] via-65% to-[#fae7d6] text-[8px] leading-[11px] text-gray-700">
      <div className="flex items-center w-[217px] gap-1">
        <svg viewBox="0 0 20 22" className="w-5 h-[22px]">
          {cold ? (
            <path d="M8 6l9 14H1z" fill="#d52222" stroke="#d52222" strokeWidth="2" strokeLinejoin="round" />
          ) : (
            <>
              <circle cx="8" cy="10" r="5" fill="#f3a536" />
              <path d="M5 20a4 4 0 0 1 0-8 6 6 0 0 1 10 1 3.500 3.500 0 0 1 0 7z" fill="#a9caf3" />
            </>
          )}
          <circle cx="14" cy="6" r="5.500" fill="#c42b1c" />
          <path d="M14 3v6" stroke="#fff" strokeWidth="1.300" />
        </svg>
        <div className="text-gray-500">
          -7°C
          <div className={clsx('whitespace-nowrap', cold ? 'text-[#d52222]' : 'text-gray-600')}>{session.weather}</div>
        </div>
      </div>
      <div className="flex items-center">
        <button aria-label="Start" className="grid grid-cols-2 gap-px w-[17px] h-[17px] ml-[10px]">
          <span className="bg-[#2f9be4]" /><span className="bg-[#27a2ea]" /><span className="bg-[#1482d8]" /><span className="bg-[#0f7bd4]" />
        </button>
        <label className="flex items-center w-[69px] h-[22px] ml-3 pl-[14px] rounded-full bg-[#fdf3f1]">
          <Search className="w-[11px] h-[11px] text-gray-800 -scale-x-100" />
          <input aria-label="Search Windows" placeholder="Search" className="ml-1 w-8 outline-none placeholder:text-gray-700" />
        </label>
        <div className="flex justify-between w-[342px] ml-[5px]">
          {apps.map((app) => (
            <button
              key={app.name}
              aria-label={app.name}
              className={clsx('flex flex-col items-center justify-center w-[26px] h-[27px] rounded', app.active && 'bg-[#fdf8f3]')}
            >
              <span className="flex items-center justify-center h-5">{app.icon}</span>
              <span className={clsx('h-[2px] mt-px rounded', app.open && 'bg-gray-500', app.active ? 'w-[10px]' : 'w-1')} />
            </button>
          ))}
        </div>
      </div>
      <div className="flex items-center ml-auto">
        <ChevronUp className="w-3 h-3" />
        <div className="w-5 ml-[11px] text-[8px] text-center">ENG<br />US</div>
        <div className="flex items-center gap-[6px] ml-3">
          <Wifi className="w-3 h-3" />
          <Volume2 className="w-3 h-3" />
          <svg viewBox="0 0 12 10" className="w-3 h-[10px]" fill="none" stroke="#444"><path d="M1 1v4h3v3h6V4H8M3 1v3" /></svg>
        </div>
        <div className="w-[54px] text-right">{session.hostTime}<br />2023-02-02</div>
        <span className="flex items-center justify-center w-[11px] h-[11px] ml-2 rounded-full bg-[#567386] text-white text-[7px]">{session.badge}</span>
      </div>
    </footer>
  );
}

function Desktop({ session }) {
  const second = session.dialogs;
  return (
    <article className="overflow-hidden">
      <TitleBar second={second} />
      <MenuBar second={second} />
      <div className={clsx('flex bg-[#e3e5e7]', second && 'border-t border-gray-500')}>
        <Library second={second} />
        <main className="flex-1 min-w-0">
          <VmTabs />
          <ServerManagerHeader second={second} />
          <div className="relative flex h-[326px] overflow-hidden">
            <SideNav />
            <Properties />
            <div className="flex flex-col w-[10px] bg-[#f0f0f0] text-gray-500">
              <ChevronUp className="w-[10px] h-[10px] p-[2px]" />
              <span className="h-[74px] bg-[#cacaca]" />
              <ChevronUp className="mt-auto w-[10px] h-[10px] p-[2px] rotate-180" />
            </div>
            <AducWindow selected={session.selected} second={second} />
            {second && <PropertiesDialog />}
            {second && <LogonHoursDialog />}
          </div>
          <ServerTaskbar time={session.serverTime} />
        </main>
      </div>
      <StatusBar hint={session.hint} />
      <HostTaskbar session={session} />
    </article>
  );
}

export default function App() {
  return (
    <div className="flex flex-col gap-[18px] min-h-screen px-[141px] pt-[140px] pb-10 bg-white font-['Open_Sans',sans-serif] leading-[10px] text-[#222]">
      {sessions.map((s) => <Desktop key={s.id} session={s} />)}
    </div>
  );
}
